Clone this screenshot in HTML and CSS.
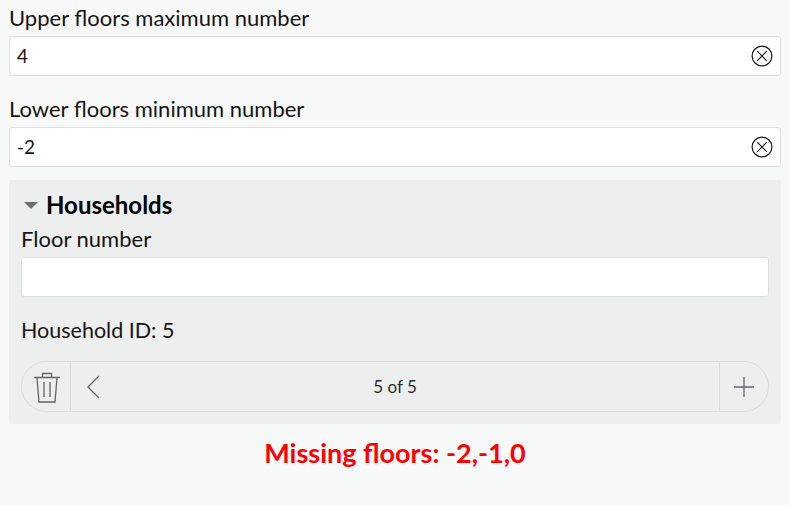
FILE: index.html
```html
<!DOCTYPE html>
<html lang="en">
<head>
    <meta charset="UTF-8">
    <title>Households form</title>
    <link rel="stylesheet" href="styles.css">
</head>
<body>
    <div class="form-group">
        <label class="field-label">Upper floors maximum number</label>
        <div class="input-box">
            <span class="input-value">4</span>
            <svg class="clear-icon" viewBox="0 0 22 22" width="22" height="22">
                <circle cx="11" cy="11" r="9.9"/>
                <path d="M6.2 6.2l9.6 9.6M15.8 6.2l-9.6 9.6"/>
            </svg>
        </div>
    </div>

    <div class="form-group">
        <label class="field-label">Lower floors minimum number</label>
        <div class="input-box">
            <span class="input-value">-2</span>
            <svg class="clear-icon" viewBox="0 0 22 22" width="22" height="22">
                <circle cx="11" cy="11" r="9.9"/>
                <path d="M6.2 6.2l9.6 9.6M15.8 6.2l-9.6 9.6"/>
            </svg>
        </div>
    </div>

    <div class="panel">
        <div class="panel-title">
            <span class="caret"></span>
            <h2>Households</h2>
        </div>
        <label class="field-label">Floor number</label>
        <div class="input-box"></div>
        <p class="household-id">Household ID: 5</p>

        <div class="pager">
            <button class="pager-btn trash" type="button">
                <svg viewBox="0 0 28 32" width="28" height="32">
                    <path d="M1 6.5h26M9.500 6V2.500h9V6M4 7l2 24h16L24 7M11 11v15M17 11v15"/>
                </svg>
            </button>
            <button class="pager-btn prev" type="button">
                <svg viewBox="0 0 14 24" width="14" height="24">
                    <path d="M13 1L2 12l11 11"/>
                </svg>
            </button>
            <span class="pager-text">5 of 5</span>
            <button class="pager-btn add" type="button">
                <svg viewBox="0 0 20 20" width="20" height="20">
                    <path d="M10 0v20M0 10h20"/>
                </svg>
            </button>
        </div>
    </div>

    <p class="warning">Missing floors: -2,-1,0</p>
</body>
</html>
```

FILE: styles.css
```css
* {
    margin: 0;
    padding: 0;
    box-sizing: border-box;
}

body {
    font-family: "Lato", "Open Sans", sans-serif;
    background: #f7f8f8;
    color: #151515;
    width: 790px;
    height: 505px;
    padding: 4px 9px 0;
    overflow: hidden;
}

.form-group {
    margin-bottom: 19px;
}

.form-group + .form-group {
    margin-bottom: 13px;
}

.field-label {
    display: block;
    font-size: 22px;
    line-height: 28px;
    margin-bottom: 4px;
}

.input-box {
    display: flex;
    align-items: center;
    justify-content: space-between;
    height: 40px;
    padding: 0 7px 2px 7px;
    background: #fff;
    border: 1px solid #dfdfdf;
    border-radius: 3px;
}

.input-value {
    font-size: 19px;
}

.clear-icon {
    margin-top: 2px;
}

.clear-icon circle,
.clear-icon path {
    fill: none;
    stroke: #151515;
    stroke-width: 1.2;
}

.panel {
    background: #edeeee;
    border-radius: 3px;
    height: 244px;
    padding: 8px 12px 0;
}

.panel-title {
    display: flex;
    align-items: center;
    gap: 8px;
    height: 32px;
    padding-left: 3px;
    margin-bottom: 5px;
}

.panel-title h2 {
    font-size: 24px;
    font-weight: 700;
    color: #000;
}

.caret {
    width: 0;
    height: 0;
    border-left: 7px solid transparent;
    border-right: 7px solid transparent;
    border-top: 7px solid #6f6f6f;
    margin-top: 3px;
}

.household-id {
    font-size: 21.5px;
    line-height: 28px;
    margin-top: 19px;
}

.pager {
    display: flex;
    align-items: center;
    height: 51px;
    margin-top: 17px;
    border: 1px solid #dcdcdc;
    border-radius: 26px;
}

.pager-btn {
    display: flex;
    align-items: center;
    justify-content: center;
    height: 100%;
    border: none;
    background: none;
}

.pager-btn svg path {
    fill: none;
    stroke: #63646e;
    stroke-width: 1.3;
}

.trash {
    width: 49px;
    padding-left: 2px;
    border-right: 1px solid #dcdcdc;
}

.prev {
    width: 43px;
}

.add {
    width: 49px;
    border-left: 1px solid #dcdcdc;
}

.pager-text {
    flex: 1;
    text-align: center;
    font-size: 17px;
    color: #2b2b2b;
    padding-right: 43px;
}

.warning {
    margin-top: 12px;
    text-align: center;
    font-size: 27px;
    font-weight: 700;
    color: #ff0000;
}
```
